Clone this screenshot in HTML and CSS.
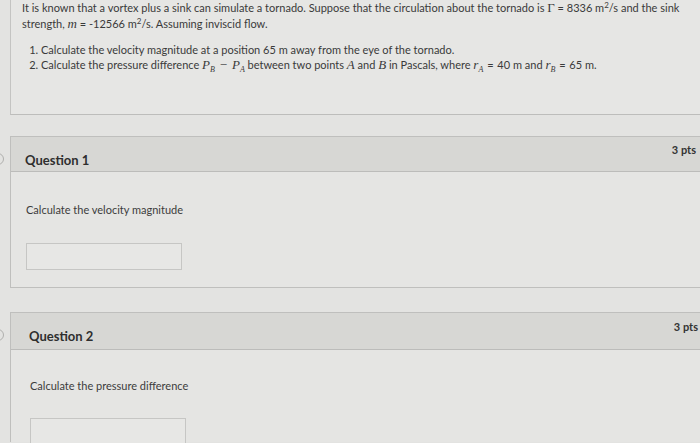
FILE: index.html
```html
<!DOCTYPE html>
<html>
<head>
<meta charset="utf-8">
<link rel="stylesheet" href="styles.css">
</head>
<body>
<div class="page">
  <div class="intro">
    <p class="lead">It is known that a vortex plus a sink can simulate a tornado. Suppose that the circulation about the tornado is <span class="math">Γ</span> = 8336 m<sup>2</sup>/s and the sink strength, <span class="math it">m</span> = -12566 m<sup>2</sup>/s. Assuming inviscid flow.</p>
    <ol class="tasks">
      <li>Calculate the velocity magnitude at a position 65 m away from the eye of the tornado.</li>
      <li>Calculate the pressure difference <span class="math it">P<sub>B</sub></span> <span class="math op">−</span> <span class="math it">P<sub>A</sub></span> between two points <span class="math it">A</span> and <span class="math it">B</span> in Pascals, where <span class="math it">r<sub>A</sub></span> <span class="eq">=</span> 40 m and <span class="math it">r<sub>B</sub></span> <span class="eq">=</span> 65 m.</li>
    </ol>
  </div>

  <div class="question">
    <span class="marker"></span>
    <div class="q-head">
      <h2 class="q-title">Question 1</h2>
      <span class="q-pts">3 pts</span>
    </div>
    <div class="q-body">
      <p class="q-text">Calculate the velocity magnitude</p>
      <div class="answer"></div>
    </div>
  </div>

  <div class="question q2">
    <span class="marker"></span>
    <div class="q-head">
      <h2 class="q-title">Question 2</h2>
      <span class="q-pts">3 pts</span>
    </div>
    <div class="q-body">
      <p class="q-text">Calculate the pressure difference</p>
      <div class="answer"></div>
    </div>
  </div>
</div>
</body>
</html>
```

FILE: styles.css
```css
* { box-sizing: border-box; }
html, body { margin: 0; padding: 0; }
body {
  background: #e3e3e1;
  font-family: Lato, "Open Sans", sans-serif;
  color: #3a3a3a;
  overflow: hidden;
  height: 443px;
}
.page {
  padding-left: 10px;
}
.intro {
  border-left: 1px solid #c4c4c2;
  border-bottom: 1px solid #bdbdbb;
  padding: 0 12px 0 11px;
  height: 115px;
  background: #e6e6e4;
}
.lead {
  margin: 0;
  font-size: 11px;
  line-height: 16px;
}
sup { font-size: 8px; line-height: 0; vertical-align: 4px; }
sub { font-size: 8px; line-height: 0; vertical-align: -3px; font-style: italic; }
.math { font-family: "Liberation Serif", "DejaVu Serif", serif; font-size: 13px; }
.math.it { font-style: italic; }
.op { margin: 0 2px; }
.eq { margin: 0 1px; }
.tasks {
  margin: 10px 0 0 0;
  padding-left: 19px;
  font-size: 11px;
  line-height: 15px;
}
.question {
  position: relative;
  margin-top: 21px;
  border: 1px solid #bfbfbd;
  border-right: none;
  background: #e5e5e3;
}
.q2 { margin-top: 24px; border-bottom: none; }
.marker {
  position: absolute;
  left: -19px;
  top: 16px;
  width: 12px;
  height: 12px;
  border: 1px solid #b0b0ae;
  border-radius: 50%;
}
.q-head {
  display: flex;
  justify-content: space-between;
  align-items: center;
  height: 35px;
  background: #d7d7d4;
  border-bottom: 1px solid #bcbcba;
  padding: 0 4px 0 14px;
}
.q2 .q-head { height: 37px; padding-left: 18px; padding-right: 2px; }
.q-title {
  margin: 12px 0 0 0;
  font-size: 13px;
  font-weight: 700;
  color: #2e2e2e;
}
.q2 .q-title { margin-top: 10px; }
.q-pts {
  font-size: 11px;
  font-weight: 700;
  color: #333;
  margin-top: -10px;
}
.q-body {
  padding: 31px 15px 0 15px;
  height: 115px;
}
.q2 .q-body { padding-left: 19px; padding-top: 29px; height: 92px; }
.q-text {
  margin: 0;
  font-size: 11px;
  line-height: 14px;
  color: #3c3c3c;
}
.answer {
  margin-top: 26px;
  width: 156px;
  height: 27px;
  border: 1px solid #c6c6c4;
  background: #e7e7e5;
}
.q2 .answer { margin-top: 25px; }
```
